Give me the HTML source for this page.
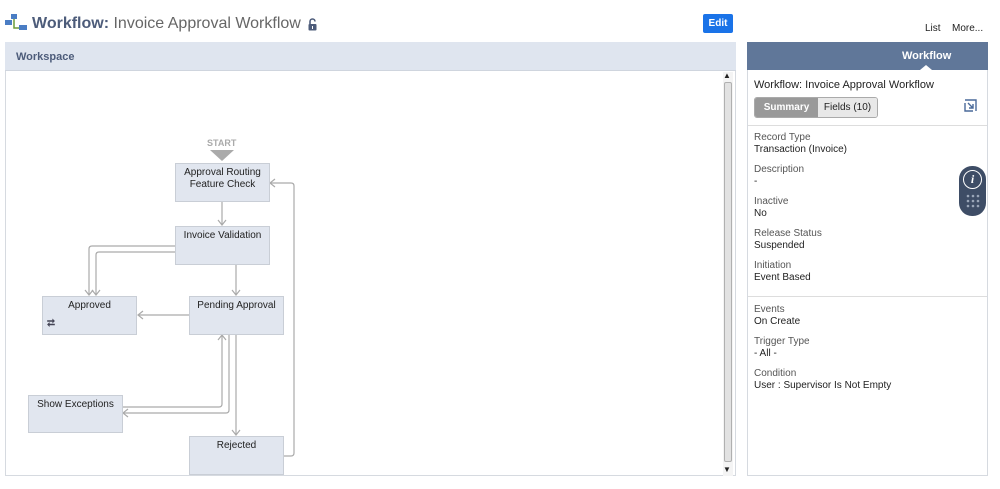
<!DOCTYPE html>
<html><head><style>
*{box-sizing:border-box;margin:0;padding:0}
body{width:1000px;height:489px;background:#fff;font-family:"Liberation Sans",sans-serif;position:relative;overflow:hidden;color:#222}
.abs{position:absolute}
.box{position:absolute;background:#e1e6ef;border:1px solid #c9ced6;font-size:10px;text-align:center;padding-top:3px;line-height:12px;color:#222}
.lbl{font-size:10px;color:#555;line-height:12px}
.val{font-size:10px;color:#222;line-height:12px}
</style></head><body>
<svg class="abs" style="left:5px;top:14px" width="22" height="18" viewBox="0 0 22 18">
<rect x="6" y="0" width="6" height="5" fill="#4a7dc4"/><rect x="0" y="6" width="7" height="5" fill="#4a7dc4"/><rect x="14" y="11" width="8" height="5" fill="#4a7dc4"/>
<path d="M9 5v9h5" stroke="#6a9c3a" stroke-width="1.5" fill="none"/></svg>
<div class="abs" style="left:32px;top:15px;font-size:16px;color:#4d5c7a;white-space:nowrap;display:flex;align-items:center"><b>Workflow:</b>&nbsp;<span style="color:#666">Invoice Approval Workflow</span>
<svg style="margin-left:7px" width="9" height="13" viewBox="0 0 9 13"><path d="M2 6V3.5a2.5 2.5 0 0 1 5 0" stroke="#4d5c7a" stroke-width="1.6" fill="none"/><rect x="0.5" y="6" width="8" height="6.5" rx="1" fill="#4d5c7a"/><rect x="4" y="8" width="1" height="3" fill="#fff"/></svg></div>
<div class="abs" style="left:703px;top:14px;width:30px;height:19px;background:#1a73e8;border-radius:2px;color:#fff;font-size:10px;font-weight:bold;text-align:center;line-height:19px">Edit</div>
<div class="abs" style="left:925px;top:23px;font-size:10px;color:#222">List</div>
<div class="abs" style="left:952px;top:23px;font-size:10px;color:#222">More...</div>

<div class="abs" style="left:5px;top:42px;width:731px;height:434px;border:1px solid #d6dae0"></div>
<div class="abs" style="left:5px;top:42px;width:731px;height:29px;background:#dfe5ef;border-bottom:1px solid #cfd5de;font-size:11px;font-weight:bold;color:#4d5c7a;padding:9px 11px">Workspace</div>
<div class="abs" style="left:723px;top:72px;width:10px;height:404px;background:#f4f4f4"></div>
<div class="abs" style="left:724px;top:82px;width:8px;height:380px;background:#e2e2e2;border:1px solid #b0b0b0;border-radius:2px"></div>
<div class="abs" style="left:723px;top:71px;font-size:8px">▲</div>
<div class="abs" style="left:723px;top:465px;font-size:8px">▼</div>

<div class="abs" style="left:207px;top:138px;font-size:9px;font-weight:bold;color:#aaa">START</div>
<svg class="abs" style="left:0;top:0" width="720" height="489">
<polygon points="210,150 234,150 222,161" fill="#aaa"/>
<g stroke="#aaa" stroke-width="1.2" fill="none">
<path d="M222 201V225"/><path d="M218 220l4 5 4-5"/>
<path d="M236 264V295"/><path d="M232 290l4 5 4-5"/>
<path d="M175 246H92q-3 0-3 3V295"/><path d="M85 290l4 5 4-5"/>
<path d="M175 252H99q-3 0-3 3V295"/><path d="M92 290l4 5 4-5"/>
<path d="M189 315H138"/><path d="M143 311l-5 4 5 4"/>
<path d="M222 335V404q0 3-3 3H122"/><path d="M218 340l4-5 4 5"/>
<path d="M229 334V410q0 3-3 3H123"/><path d="M128 409l-5 4 5 4"/>
<path d="M236 334V435"/><path d="M232 430l4 5 4-5"/>
<path d="M283 456H291q3 0 3-3V186q0-3-3-3H270"/><path d="M275 179l-5 4 5 4"/>
</g></svg>
<div class="box" style="left:175px;top:163px;width:95px;height:39px">Approval Routing<br>Feature Check</div>
<div class="box" style="left:175px;top:226px;width:95px;height:39px">Invoice Validation</div>
<div class="box" style="left:42px;top:296px;width:95px;height:39px">Approved<div style="text-align:left;padding-left:4px;margin-top:6px;font-size:10px;font-weight:bold;color:#445">⮂</div></div>
<div class="box" style="left:189px;top:296px;width:95px;height:39px">Pending Approval</div>
<div class="box" style="left:28px;top:395px;width:95px;height:38px">Show Exceptions</div>
<div class="box" style="left:189px;top:436px;width:95px;height:39px">Rejected</div>

<div class="abs" style="left:747px;top:42px;width:241px;height:434px;border:1px solid #d6dae0"></div>
<div class="abs" style="left:747px;top:42px;width:241px;height:28px;background:#607799;color:#fff;font-size:11px;font-weight:bold;padding:8px 0 0 155px">Workflow</div>
<div class="abs" style="left:920px;top:65px;width:0;height:0;border-left:6px solid transparent;border-right:6px solid transparent;border-bottom:5px solid #fff"></div>
<div class="abs val" style="left:754px;top:79px;font-size:11px">Workflow: Invoice Approval Workflow</div>
<div class="abs" style="left:754px;top:97px;width:124px;height:21px;border:1px solid #aaa;border-radius:3px;overflow:hidden;font-size:10px;display:flex">
<div style="width:63px;background:#999;color:#fff;font-weight:bold;text-align:center;line-height:19px">Summary</div>
<div style="flex:1;background:#e8e8e8;text-align:center;line-height:19px">Fields (10)</div></div>
<svg class="abs" style="left:964px;top:99px" width="13" height="13" viewBox="0 0 13 13"><path d="M1 4V12H9M1 1H12V12" stroke="#4a6a9a" stroke-width="1.4" fill="none"/><path d="M4 4L9 9M5 9H9V5" stroke="#4a6a9a" stroke-width="1.4" fill="none"/></svg>
<div class="abs" style="left:748px;top:125px;width:239px;height:1px;background:#ddd"></div>
<div class="abs" style="left:754px;top:132px">
<div class="lbl">Record Type</div><div class="val">Transaction (Invoice)</div>
<div class="lbl" style="margin-top:8px">Description</div><div class="val">-</div>
<div class="lbl" style="margin-top:8px">Inactive</div><div class="val">No</div>
<div class="lbl" style="margin-top:8px">Release Status</div><div class="val">Suspended</div>
<div class="lbl" style="margin-top:8px">Initiation</div><div class="val">Event Based</div>
</div>
<div class="abs" style="left:748px;top:296px;width:239px;height:1px;background:#ddd"></div>
<div class="abs" style="left:754px;top:304px">
<div class="lbl">Events</div><div class="val">On Create</div>
<div class="lbl" style="margin-top:8px">Trigger Type</div><div class="val">- All -</div>
<div class="lbl" style="margin-top:8px">Condition</div><div class="val">User : Supervisor Is Not Empty</div>
</div>
<div class="abs" style="left:959px;top:166px;width:27px;height:50px;background:#3e4d66;border-radius:13px"></div>
<div class="abs" style="left:963px;top:170px;width:19px;height:19px;border:1.5px solid #fff;border-radius:50%;color:#fff;font-family:'Liberation Serif',serif;font-style:italic;font-weight:bold;font-size:12px;text-align:center;line-height:16px">i</div>
<svg class="abs" style="left:966px;top:194px" width="14" height="14"><g fill="#9aa6b8"><circle cx="2" cy="2" r="1.3"/><circle cx="7" cy="2" r="1.3"/><circle cx="12" cy="2" r="1.3"/><circle cx="2" cy="7" r="1.3"/><circle cx="7" cy="7" r="1.3"/><circle cx="12" cy="7" r="1.3"/><circle cx="2" cy="12" r="1.3"/><circle cx="7" cy="12" r="1.3"/><circle cx="12" cy="12" r="1.3"/></g></svg>
</body></html>
